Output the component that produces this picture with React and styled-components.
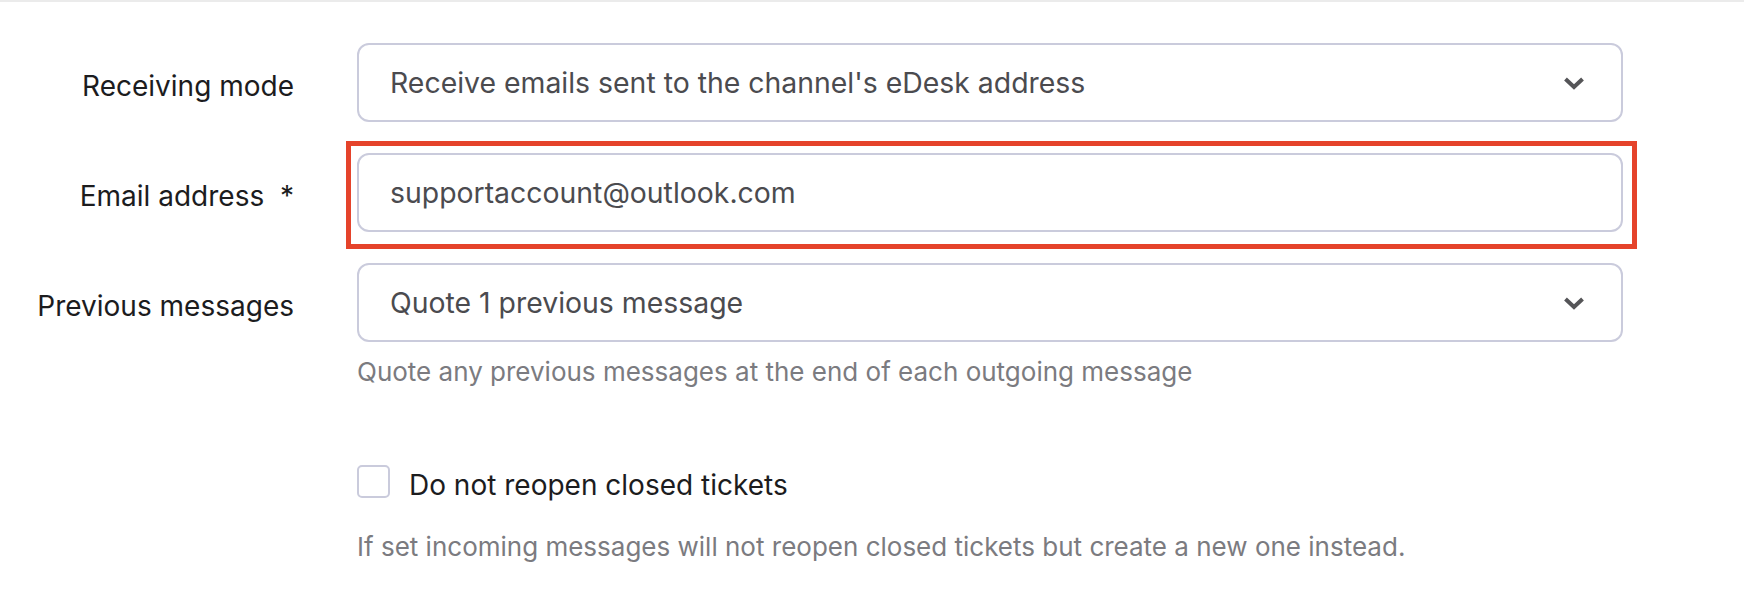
import React from "react";
import styled, { createGlobalStyle } from "styled-components";

const Global = createGlobalStyle`
  html, body { margin: 0; padding: 0; background: #ffffff; }
  body { font-family: Inter, "Noto Sans", sans-serif; -webkit-font-smoothing: antialiased; }
`;

const Page = styled.div`
  border-top: 2px solid #ebebeb;
  padding: 41px 0 0 0;
  min-height: 604px;
  box-sizing: border-box;
`;

const Form = styled.div`
  display: grid;
  grid-template-columns: 294px 1266px;
  column-gap: 63px;
  row-gap: 31px;
  align-items: center;
`;

const Label = styled.label`
  justify-self: end;
  font-size: 28px;
  line-height: 36px;
  color: #1c1c1e;
  white-space: pre;
  position: relative;
  top: 3px;
`;

const FieldCol = styled.div`
  display: flex;
  flex-direction: column;
  grid-column: ${(p) => (p.$offset ? "2" : "auto")};
`;

const Box = styled.div`
  height: 79px;
  box-sizing: border-box;
  border: 2px solid #cacbdc;
  border-radius: 12px;
  display: flex;
  align-items: center;
  justify-content: space-between;
  padding: 0 36px 0 31px;
  font-size: 28.4px;
  color: #4b4b4f;
  background: #fff;
`;

const HighlightFrame = styled.div`
  margin: -12px -14px -17px -11px;
  padding: 7px 9px 12px 6px;
  border: 5px solid #e5432b;
`;

const Help = styled.div`
  margin-top: ${(p) => p.$mt}px;
  font-size: 26px;
  line-height: 36px;
  color: #7b7b80;
`;

const CheckRow = styled.div`
  display: flex;
  align-items: center;
  gap: 19px;
  margin-top: 73px;
`;

const CheckBox = styled.span`
  width: 33px;
  height: 33px;
  box-sizing: border-box;
  border: 2px solid #cacbdc;
  border-radius: 5px;
  flex: none;
`;

const CheckLabel = styled.span`
  font-size: 28px;
  line-height: 36px;
  color: #1c1c1e;
  position: relative;
  top: 4px;
`;

const Chevron = () => (
  <svg width="22" height="14" viewBox="0 0 22 14" fill="none">
    <polyline points="2.5,3 11,11 19.5,3" stroke="#555558" strokeWidth="4" />
  </svg>
);

export default function App() {
  return (
    <Page>
      <Global />
      <Form>
        <Label>Receiving mode</Label>
        <Box>
          <span>Receive emails sent to the channel's eDesk address</span>
          <Chevron />
        </Box>

        <Label>{"Email address  *"}</Label>
        <HighlightFrame>
          <Box>
            <span>supportaccount@outlook.com</span>
          </Box>
        </HighlightFrame>

        <Label>Previous messages</Label>
        <Box>
          <span>Quote 1 previous message</span>
          <Chevron />
        </Box>

        <FieldCol $offset>
          <Help $mt={-19}>Quote any previous messages at the end of each outgoing message</Help>
          <CheckRow>
            <CheckBox />
            <CheckLabel>Do not reopen closed tickets</CheckLabel>
          </CheckRow>
          <Help $mt={30}>If set incoming messages will not reopen closed tickets but create a new one instead.</Help>
        </FieldCol>
      </Form>
    </Page>
  );
}
